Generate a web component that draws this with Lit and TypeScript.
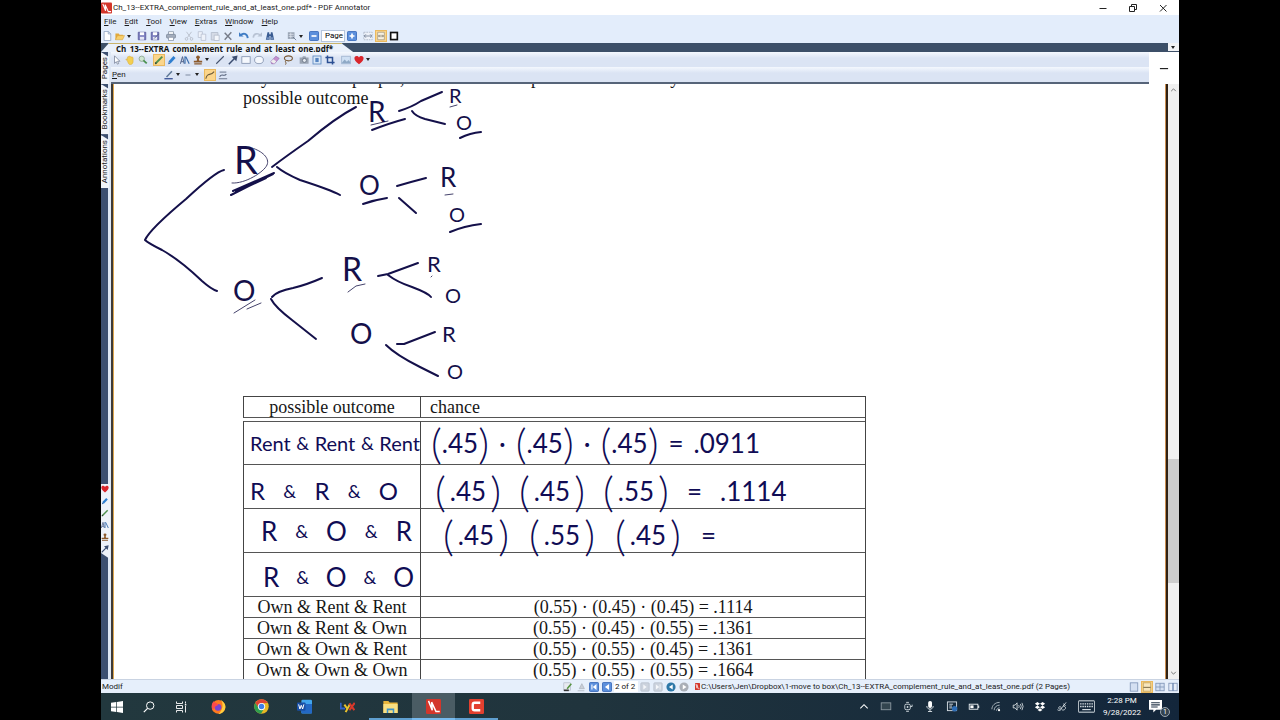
import { LitElement, html, svg, css } from "lit";
import { customElement, property } from "lit/decorators.js";
import { classMap } from "lit/directives/class-map.js";

const blueBox = (inner: unknown) => svg`<rect x="0.5" y="0.5" width="11" height="11" rx="1.5" fill="#5b8fdc" stroke="#2f62b4"/>${inner}`;
const greyBox = (inner: unknown) => svg`<rect x="1" y="1" width="10" height="10" rx="1" fill="#ccd3de" stroke="#b9c1ce"/>${inner}`;
const floppy = svg`<path d="M1.5 1.5h9v9h-9z" fill="#7d7fc0" stroke="#5a5b9c"/><path d="M3.5 1.5h5v3.5h-5z" fill="#fff"/><path d="M3.5 7h5v3.5h-5z" fill="#e6e8f6"/>`;
const annot = svg`<rect width="12" height="12" rx="1" fill="#d3362b"/><path d="M2 1.5 5 9 4.5 2.5 8 10H11" fill="none" stroke="#fff" stroke-width="1.2"/>`;

const ICONS: Record<string, unknown> = {
  annot,
  new: svg`<path d="M2.5.5h5l3 3v8h-8z" fill="#fff" stroke="#8fa3c0"/><path d="M7.500.5v3h3" fill="none" stroke="#8fa3c0"/>`,
  open: svg`<path d="M.5 10.500V3h4l1 1.500h4V6" fill="#e2a93c"/><path d="M.5 10.500 3 5.500h8.500l-2.500 5z" fill="#f7cf6b" stroke="#d39a34" stroke-width=".6"/>`,
  save: floppy,
  saveas: svg`${floppy}<path d="M5 9 10.500 3.500" stroke="#555c80"/>`,
  print: svg`<path d="M3 4V.8h6V4" fill="#fff" stroke="#8b97a8"/><rect x=".7" y="4" width="10.600" height="4.500" rx="1" fill="#a4aebd" stroke="#7b8799"/><path d="M3 7.500h6v4H3z" fill="#fff" stroke="#8b97a8"/>`,
  cut: svg`<g fill="none" stroke="#b4bac6"><path d="M3 1l5 7M9 1 4 8"/><circle cx="3" cy="9.500" r="1.600"/><circle cx="9" cy="9.500" r="1.600"/></g>`,
  copy: svg`<g fill="#eef2fa" stroke="#b9c2d2"><path d="M1.500.8h5v7h-5z"/><path d="M5 3.800h5.500v7.500H5z"/></g>`,
  paste: svg`<g stroke="#b3bccb"><path d="M1.500 1.800h8v9h-8z" fill="#d5dbe6"/><path d="M5 5h6v6.500H5z" fill="#f3f6fb"/></g>`,
  del: svg`<path d="M2 2 10 10.500M10 1.500 2 10.500" stroke="#777d8a" stroke-width="1.700"/>`,
  undo: svg`<path d="M2 5c3-3 8-2 8.500 3.500" fill="none" stroke="#3f7cc4" stroke-width="2.200"/><path d="M0 6.500V1.500L5.500 6.500z" fill="#3f7cc4"/>`,
  redo: svg`<path d="M10 5C7 2 2 3 1.500 8" fill="none" stroke="#b8c3d4" stroke-width="2"/><path d="M12 6.500V1.500L6.500 6.500z" fill="#b8c3d4"/>`,
  find: svg`<path d="M3 1.500h2l.7 9H1zM7 1.500h2l2 9H6.300z" fill="#3a5c92"/><path d="M4.500 5h3" stroke="#3a5c92" stroke-width="2"/><path d="M2 8.500h3M7 8.500h3" stroke="#a9c4ea"/>`,
  view: svg`<rect x="1" y="1.500" width="8" height="8" fill="#9aa5b5"/><path d="M2 4h6M2 6.500h6M4.500 2v7" stroke="#e7ecf4" stroke-width=".8"/><path d="M7 7l4 4" stroke="#66758c"/>`,
  minus: blueBox(svg`<path d="M3 6h6" stroke="#fff" stroke-width="2"/>`),
  plus: blueBox(svg`<path d="M3 6h6M6 3v6" stroke="#fff" stroke-width="2"/>`),
  fitw: svg`<path d="M1 1.500h10v9H1z" fill="#eef2f9" stroke="#a9b4c6" stroke-dasharray="2 1"/><path d="M1.500 6h9M3.500 4 1.500 6l2 2M8.500 4l2 2-2 2" fill="none" stroke="#6f7d93"/>`,
  fitp: svg`<path d="M2 1.500h8v9H2z" fill="#f8f1e0" stroke="#a9a08a"/><path d="M3 6h6M4.500 4.500 3 6l1.500 1.500M7.500 4.500 9 6 7.500 7.500" fill="none" stroke="#7f786a"/>`,
  full: svg`<rect x="2" y="1.800" width="8" height="8.500" fill="#fff" stroke="#111" stroke-width="2"/>`,
  cursor: svg`<path d="M3 1v9l2.200-2L6.500 11 8 10.300 6.700 7.500H9.500z" fill="#fff" stroke="#66718a" stroke-width=".8"/>`,
  hand: svg`<path d="M3 7 1 5.500c0-1 1-1 2 0V2.500c.5-1 1.500-.7 1.500 0 0-1.500 1.700-1.500 1.700 0 .3-1 1.700-.8 1.700.4.5-.7 1.800-.4 1.800.6V8c0 2-1.500 3.500-3.500 3.500S3.500 9 3 7z" fill="#f3cf52" stroke="#d9a92e" stroke-width=".6"/>`,
  zoom: svg`<circle cx="4.500" cy="4.500" r="3.200" fill="#cfe6d0" stroke="#8ba392"/><path d="M6.500 6.500 10.500 10" stroke="#4a9150" stroke-width="2.200"/>`,
  pen: svg`<path d="M1.500 10.500 10 2" stroke="#4e8f4d" stroke-width="2.200"/><path d="M1 11l1-2.500L3.500 10z" fill="#333"/>`,
  marker: svg`<path d="M3 9 9 2.500" stroke="#2f7fd0" stroke-width="3.400"/><path d="M1.500 11 2 8.500 4 10.200z" fill="#1d4f93"/>`,
  text: svg`<path d="M.5 10.500 3 2l2 8.500M1.300 8h3" fill="none" stroke="#52658c" stroke-width="1.200"/><path d="M6 1.500v9M7 2l4 8.500" stroke="#3c6fae" stroke-width="1.400"/>`,
  stamp: svg`<circle cx="6" cy="2.800" r="2.200" fill="#8c5a2c"/><path d="M5 4h2l.5 3H11v2H1V7h3.500zM1.500 10h9v1.500h-9z" fill="#8c5a2c"/>`,
  line: svg`<path d="M1.500 10.500 10.500 1.500" stroke="#46536e" stroke-width="1.300"/>`,
  arrow: svg`<path d="M1 11 8 4" stroke="#3c4e70" stroke-width="1.800"/><path d="M11.500.5 10 7.500 4.500 2z" fill="#3c4e70"/>`,
  rect: svg`<rect x="1" y="2" width="10" height="8" fill="#f5f8fd" stroke="#8393ae"/>`,
  oval: svg`<ellipse cx="6" cy="6" rx="5.300" ry="4.400" fill="#f5f8fd" stroke="#8393ae"/>`,
  eraser: svg`<path d="M1 8 7 1.500 11 4 5.500 10.500 2 10.500z" fill="#c592d0" stroke="#8e62a8" stroke-width=".7"/><path d="M1 8l4 2.500L7.500 7.500 3.800 5z" fill="#eee"/>`,
  lasso: svg`<ellipse cx="6.500" cy="4" rx="4.800" ry="3" fill="none" stroke="#7a5a35" stroke-width="1.300"/><path d="M3.500 6.500C1.500 8 5 9 3 11.500" fill="none" stroke="#7a5a35" stroke-width="1.200"/>`,
  camera: svg`<path d="M.8 3h3l1-1.500h3L8.500 3h3v7.500H.8z" fill="#9ba4b2"/><circle cx="6.500" cy="6.500" r="2.400" fill="#e6eaf0" stroke="#626d7e"/>`,
  snap: svg`<rect x="1.200" y="1.200" width="9.600" height="9.600" fill="#dce9f8" stroke="#5a87bf"/><rect x="4" y="3.500" width="4" height="5" fill="#5483c0"/>`,
  crop: svg`<path d="M3 .5v8.500h8.500M.5 3H9v8.500" fill="none" stroke="#2b4f93" stroke-width="1.800"/>`,
  picture: svg`<rect x=".8" y="1.500" width="10.400" height="9" fill="#cfe0f4" stroke="#9fb4d0"/><path d="M1.300 9l3-3.500L7 8l2-2 2 2.500V10H1.300z" fill="#8fa9c6"/>`,
  heart: svg`<path d="M6 11.200C2 8 .5 6 .5 3.900.5.800 4.500.2 6 2.900 7.500.2 11.500.8 11.500 3.900 11.500 6 10 8 6 11.200z" fill="#d9252b"/>`,
  penw: svg`<path d="M3 8.500 9.500 1.500" stroke="#5e7896" stroke-width="1.800"/><path d="M.5 10.500h10" stroke="#253f8b" stroke-width="1.400"/>`,
  dash: svg`<path d="M3 6h6" stroke="#6e7c94"/>`,
  curve: svg`<path d="M1 10.500C3 2 6 8 11 2" fill="none" stroke="#6b5a39" stroke-width="1.300"/>`,
  press: svg`<path d="M1 10.500h10M2 2.500h8" stroke="#55627a"/><path d="M2 8C5 3 7 9 10 5" fill="none" stroke="#55627a" stroke-width="1.300"/>`,
  edit: svg`<rect x="1" y="1" width="8" height="9" fill="#e8ebf1" stroke="#a8b0bd" stroke-width=".7"/><path d="M5 8l5-6" stroke="#55943f" stroke-width="1.800"/><path d="M1 10h6" stroke="#333" stroke-width="2"/>`,
  edit2: svg`<path d="M2 10.500h8M4 8l3-6 3 6z" fill="#c9cfd8" stroke="#b0b7c2"/>`,
  first: blueBox(svg`<path d="M3.500 3v6" stroke="#fff" stroke-width="1.300"/><path d="M9 2.500v7L4.500 6z" fill="#fff"/>`),
  prev: blueBox(svg`<path d="M8.500 2.500v7L3.500 6z" fill="#fff"/>`),
  next: greyBox(svg`<path d="M4 3v6l4-3z" fill="#f5f7fa"/>`),
  last: greyBox(svg`<path d="M3.500 3v6l4-3z" fill="#f5f7fa"/><path d="M8.500 3v6" stroke="#f5f7fa"/>`),
  back: svg`<circle cx="6" cy="6" r="5.500" fill="#2d78a8"/><path d="M8 3v6L3.500 6z" fill="#fff"/>`,
  fwd: svg`<circle cx="6" cy="6" r="5.500" fill="#a9aeb6"/><path d="M4.500 3v6L9 6z" fill="#fff"/>`,
  lay1: svg`<rect x="1.500" y="1" width="9" height="10" fill="#d4e0f2" stroke="#7f95b8"/>`,
  lay2: svg`<rect x="1.500" y="1" width="9" height="10" fill="#f7e6bd" stroke="#c2a35c"/><path d="M1.500 6.500h9" stroke="#8d7d58" stroke-width="1.400"/>`,
  lay3: svg`<rect x="1" y="1.500" width="10" height="9" fill="#d4e0f2" stroke="#7f95b8"/><path d="M6 1.500v9M1 6h10" stroke="#7f95b8"/>`,
  lay4: svg`<rect x="1" y="1.500" width="10" height="9" fill="#e6edf8" stroke="#7f95b8"/><path d="M6 1.500v9" stroke="#5876a5" stroke-width="1.400"/>`,
  min: svg`<path d="M2.500 6.500h7" stroke="#222"/>`,
  restore: svg`<path d="M2.500 4.500h5v5h-5zM4.500 4.500v-2h5v5h-2" fill="none" stroke="#222"/>`,
  close: svg`<path d="M3 3l6.500 6.500M9.500 3 3 9.500" stroke="#222"/>`,
  windows: svg`<path d="M0 1.700 5.300 1v4.700H0zM6 .9 12 0v5.700H6zM0 6.400h5.300V11L0 10.300zM6 6.400h6V12l-6-.9z" fill="#fff"/>`,
  search: svg`<circle cx="7.200" cy="4.600" r="3.700" fill="none" stroke="#fff"/><path d="M4.600 7.300.8 11.200" stroke="#fff" stroke-width="1.200"/>`,
  taskview: svg`<path d="M1.500.5v2h6v-2M1.500 11.500v-2h6v2M1.500 4.500h6v3h-6zM10.500.5v2M10.500 5v6.500" fill="none" stroke="#fff" stroke-width=".9"/><rect x="9.800" y="3" width="1.500" height="1.500" fill="#fff"/>`,
  firefox: svg`<circle cx="6" cy="6.300" r="5.500" fill="#ff7a1f"/><path d="M8 .3c1 1.800 4 3 3.500 6.500C11 10 8.500 12 6 12 9 9 10.500 5 8 .3z" fill="#ffcf3e"/><circle cx="5.600" cy="6.600" r="2.700" fill="#7a44cf"/><path d="M.6 5C.8 3.500 1.500 2.500 2 1.800 2.500 3 4.500 3 6 4.500L3.500 6 1 9z" fill="#ff4a4a"/>`,
  chrome: svg`<circle cx="6" cy="6" r="5.800" fill="#e8b824"/><path d="M1 3.100A5.800 5.800 0 0 1 11 3.100L6 3.400 3.600 7.200z" fill="#dd4335"/><path d="M1 3.100A5.800 5.800 0 0 0 5.600 11.800L8 7.700 4 7.500z" fill="#2f9e4f"/><circle cx="6" cy="6" r="2.900" fill="#fff"/><circle cx="6" cy="6" r="2.200" fill="#3f7fe8"/>`,
  word: svg`<rect x="3.500" y=".5" width="8.500" height="11" rx="1" fill="#41a5ee"/><path d="M3.500 4H12v7.500H3.500z" fill="#2368c4"/><rect x="0" y="2.700" width="6.800" height="6.600" rx=".7" fill="#184fa5"/><path d="M1.300 4.300 2.300 8 3.400 5 4.500 8 5.500 4.300" fill="none" stroke="#fff" stroke-width=".8"/>`,
  lyx: svg`<path d="M.5 3v4.500H4" fill="none" stroke="#2f61c9" stroke-width="1.600"/><path d="M3.500 4.500 6 8M8 4 4.500 10.500" stroke="#e9c22d" stroke-width="1.600"/><path d="M7.500 3.500 11.500 9M11.800 3 7.500 9" stroke="#d8382b" stroke-width="1.700"/>`,
  folder: svg`<path d="M.3 1.500h4l1 1.200h6.400v8.500H.3z" fill="#e9b53c"/><path d="M.3 4h11.400v7.200H.3z" fill="#f9df83"/><path d="M3 11.200V7.500h6v3.700H7.800V9H4.200v2.200z" fill="#3f93c9"/>`,
  camtasia: svg`<rect width="12" height="12" rx="1" fill="#e3402f"/><path d="M9 3H4.500Q3 3 3 4.500v3Q3 9 4.500 9H9" fill="none" stroke="#fff" stroke-width="1.900"/>`,
  up: svg`<path d="M2 8l4-4 4 4" fill="none" stroke="currentColor" stroke-width="1.100"/>`,
  tablet: svg`<rect x=".8" y="2" width="10.400" height="7.500" fill="#33454f" stroke="#8a979f"/>`,
  meet: svg`<rect x="2.500" y="3.500" width="6" height="6" rx="1.500" fill="none" stroke="#cfd8dd"/><path d="M4 1.500h3M8.500 6h2V4M4 11.300h3" stroke="#cfd8dd" fill="none"/><circle cx="5.500" cy="6.500" r="1" fill="#cfd8dd"/>`,
  mic: svg`<rect x="4" y="0" width="4.200" height="7.500" rx="2" fill="#fff"/><path d="M2.500 5.500c0 4.500 7 4.500 7 0M6 9v2.500M3.800 11.500h4.500" fill="none" stroke="#dfe6ea"/>`,
  outlook: svg`<rect x="1" y="1" width="10" height="9.500" fill="none" stroke="#d5dde3"/><path d="M3 3.500h4M3 5.500h3M3 7.500h3" stroke="#d5dde3"/><circle cx="8.800" cy="8.500" r="3" fill="#2e6db4"/>`,
  battery: svg`<rect x=".8" y="3.500" width="9.400" height="5.500" fill="none" stroke="#e8edf0"/><path d="M10.500 5h1.200v2.500h-1.200z" fill="#e8edf0"/><path d="M2 4.800h3.500v3H2z" fill="#fff"/>`,
  wifi: svg`<g fill="none" stroke="#aebac1"><path d="M1.500 9C1.500 5 5 1.500 10 1.500M4 10c0-3 2.500-5.500 6-5.500M6.500 10.500C6.500 9 8 7.500 10 7.500"/></g><circle cx="9.300" cy="10" r="1.200" fill="#fff"/>`,
  speaker: svg`<path d="M.8 4.500h2L5 2v8L2.800 7.500h-2z" fill="none" stroke="#e3e9ec" stroke-width=".9"/><path d="M6.800 4.500q1 1.500 0 3M8.600 3.200q1.900 2.800 0 5.600M10.300 2q2.500 4 0 8" fill="none" stroke="#dde4e8" stroke-width=".9"/>`,
  dropbox: svg`<path d="M3.200 1 6 2.900 3.200 4.800.4 2.900zM8.800 1l2.800 1.900L8.800 4.800 6 2.900zM3.200 4.900 6 6.800 3.200 8.700.4 6.800zM8.800 4.900l2.800 1.900-2.800 1.900L6 6.800zM6 7.900l2.700 1.800L6 11.500 3.300 9.700z" fill="#fff"/>`,
  inkpen: svg`<path d="M1 9.500C4 12 7 8 4.500 6.500S1 10 5 8.500L10.500 1.500M7.500 3l2.500 2M6 9.500C8 11 11 8 9.500 6.500S7 7 8 4" fill="none" stroke="#dde4e8" stroke-width=".9"/>`,
  keyboard: svg`<rect x=".2" y="2" width="11.600" height="8" rx=".5" fill="none" stroke="#dde4e8" stroke-width=".7"/><path d="M1.500 4.200h9M1.500 6h9" stroke="#dde4e8" stroke-width=".9" stroke-dasharray="1 .6"/><path d="M3 8.200h6" stroke="#dde4e8" stroke-width=".8"/>`,
};

const icon = (n: string) => html`<svg class="ico" viewBox="0 0 12 12" aria-hidden="true">${ICONS[n]}</svg>`;

// "|" is a narrow separator, "||" and "|||" wider ones, "v" a drop-down arrow, "*" marks the active tool.
const TOOLBAR = ["new", "open", "v", "|", "save", "saveas", "|", "print", "||", "cut", "copy", "paste", "del", "|", "undo", "redo", "find", "|||", "view", "v", "|", "minus"];
const TOOLBAR_END = ["plus", "|", "fitw", "*fitp", "full"];
const TOOLS = ["cursor", "hand", "zoom", "|", "*pen", "marker", "text", "stamp", "v", "|", "line", "arrow", "rect", "oval", "|", "eraser", "lasso", "|", "camera", "snap", "crop", "|", "picture", "heart", "v"];
const PEN_OPTIONS = ["penw", "v", "dash", "v", "|", "*curve", "press"];

const tools = (list: string[]) =>
  list.map((n) => {
    if (n[0] === "|") return html`<span class="sep s${n.length}"></span>`;
    if (n === "v") return html`<button class="drop" aria-label="More"></button>`;
    const on = n[0] === "*";
    const name = on ? n.slice(1) : n;
    return html`<button class=${classMap({ tool: true, on })} aria-label=${name}>${icon(name)}</button>`;
  });

type Node = [string, number, number, number];
const NODES: Node[] = [
  ["R", 234, 174, 38], ["R", 368, 122, 28], ["R", 449, 103, 20], ["O", 456, 130, 20],
  ["O", 359, 195, 26], ["R", 440, 187, 26], ["O", 449, 222, 20],
  ["O", 233, 301, 28], ["R", 342, 281, 32], ["R", 427, 272, 22], ["O", 445, 303, 20],
  ["O", 350, 344, 28], ["R", 442, 342, 22], ["O", 447, 379, 20],
];
const STROKES = [
  "M224 170Q215 172 186 199Q150 229 145 240Q148 243 162 250Q180 260 202 281Q211 289 217 291",
  "M272 167Q285 157 308 141Q335 118 356 107", "M277 167Q284 173 300 180Q331 190 340 195",
  "M399 111Q412 107 421 101L442 92", "M412 111Q415 116 425 119L445 124",
  "M397 186L411 182L426 178", "M399 198L416 213",
  "M322 278Q306 285 293 288Q277 291 272 297", "M271 299Q275 307 292 320L316 339",
  "M378 276L388 274L418 263", "M388 275Q397 282 412 287Q428 293 431 297",
  "M397 344L404 344L435 332", "M386 345Q396 355 420 367L438 376",
  "M231 195L273 174M233 191L274 173M236 192L266 178",
  "M372 130Q390 123 405 119", "M460 138Q470 133 481 132",
  "M363 204Q374 200 387 198", "M450 232Q464 226 481 224",
];
const THIN = [
  "M252 148C262 151 270 158 267 165S245 184 232 183", "M371 125L388 121", "M450 107L457 105", "M445 195L453 194",
  "M234 313L255 300M247 309L261 303", "M348 292L356 286L365 284M431 277L432 276",
];

const INK_ROWS = [
  { cls: "r1", outcome: ["Rent", "&", "Rent", "&", "Rent"], chance: ["(.45)", "·", "(.45)", "·", "(.45)", "=", ".0911"] },
  { cls: "r2", outcome: ["R", "&", "R", "&", "O"], chance: ["(.45)", "(.45)", "(.55)", "=", ".1114"] },
  { cls: "r3", outcome: ["R", "&", "O", "&", "R"], chance: ["(.45)", "(.55)", "(.45)", "="] },
  { cls: "r4", outcome: ["R", "&", "O", "&", "O"], chance: [] as string[] },
];
const TYPED_ROWS = [
  ["Own & Rent & Rent", "(0.55) · (0.45) · (0.45) = .1114"],
  ["Own & Rent & Own", "(0.55) · (0.45) · (0.55) = .1361"],
  ["Own & Own & Rent", "(0.55) · (0.55) · (0.45) = .1361"],
  ["Own & Own & Own", "(0.55) · (0.55) · (0.55) = .1664"],
];

const base = css`
  * { box-sizing: border-box; }
  button { font: inherit; color: inherit; border: 0; padding: 0; margin: 0; background: none; display: block; flex: none; }
  .ico { display: block; width: 100%; height: 100%; }
`;

@customElement("pdf-page")
class PdfPage extends LitElement {
  static styles = [base, css`
    :host { display: block; overflow: hidden; min-height: 0; background: #fff; color: #161616; font: 18px/20px "Liberation Serif", serif; }
    .intro { margin: -16px 129px 0; }
    .tree { margin: 0 0 0 16px; }
    .tree svg { display: block; overflow: visible; }
    .stroke { fill: none; stroke: #14104a; stroke-width: 2; stroke-linecap: round; stroke-linejoin: round; }
    .thin { fill: none; stroke: #45436c; stroke-width: 1; stroke-linecap: round; }
    .node { font-family: Lato, sans-serif; fill: #14104a; }
    table { width: 59.3%; margin-left: 129px; border-collapse: separate; border-spacing: 0; table-layout: fixed; border-right: 1px solid #444; }
    .first { width: 177px; }
    th, td { padding: 0; border-left: 1px solid #444; border-bottom: 1px solid #555; font-weight: normal; white-space: nowrap; text-align: center; height: 21px; }
    th { border-top: 1px solid #444; height: 22px; }
    th.chance { text-align: left; padding-left: 9px; }
    tbody::before { content: ""; display: table-row; height: 3px; }
    .r1 td { border-top: 1px solid #555; }
    .ink td { height: 44px; }
    .hand { display: flex; align-items: center; height: 42px; color: #100c55; font: 24px/42px Lato, sans-serif; }
    .outcome { justify-content: space-between; }
    .r1 .outcome { font-size: 20px; padding-left: 6px; }
    .r2 .outcome { padding: 8px 22px 0 6px; }
    .r3 .outcome { padding: 0 8px 0 17px; font-size: 26px; }
    .r4 .outcome { padding: 4px 6px 0 19px; font-size: 26px; }
    .amp { font-size: 18px; }
    .odds { font-size: 26px; padding-left: 10px; gap: 10px; }
    .r2 .odds { padding: 8px 0 0 14px; gap: 18px; }
    .r3 .odds { padding: 8px 0 0 22px; gap: 20px; }
    .group { display: flex; align-items: center; }
    .r2 .group, .r3 .group { gap: 4px; }
    .paren { font-size: 42px; font-weight: 300; }
  `];

  private term(t: string) {
    if (t[0] !== "(") return html`<span>${t}</span>`;
    return html`<span class="group"><span class="paren">(</span><span>${t.slice(1, -1)}</span><span class="paren">)</span></span>`;
  }

  render() {
    return html`
      <p class="intro">Say we have 3 people, use a tree to compute chances for any<br>possible outcome</p>
      <figure class="tree">
        <svg width="400" height="288" viewBox="130 108 400 288" role="img" aria-label="Outcome tree">
          ${STROKES.map((d) => svg`<path class="stroke" d=${d} />`)}
          ${THIN.map((d) => svg`<path class="thin" d=${d} />`)}
          ${NODES.map(([t, x, y, s]) => svg`<text class="node" x=${x} y=${y} font-size=${s}>${t}</text>`)}
        </svg>
      </figure>
      <table>
        <colgroup><col class="first"><col></colgroup>
        <thead><tr><th>possible outcome</th><th class="chance">chance</th></tr></thead>
        <tbody>
          ${INK_ROWS.map((r) => html`<tr class="ink ${r.cls}">
            <td><div class="hand outcome">${r.outcome.map((w) => html`<span class=${classMap({ amp: w === "&" })}>${w}</span>`)}</div></td>
            <td><div class="hand odds">${r.chance.map((t) => this.term(t))}</div></td>
          </tr>`)}
          ${TYPED_ROWS.map(([o, c]) => html`<tr><td>${o}</td><td>${c}</td></tr>`)}
        </tbody>
      </table>`;
  }
}

@customElement("task-bar")
class TaskBar extends LitElement {
  static styles = [base, css`
    :host { display: flex; height: 27px; flex: none; background: linear-gradient(90deg, #22383e, #20343d 45%, #13263b); color: #fff; font: 8px/12px Roboto, sans-serif; }
    .app { display: flex; align-items: center; justify-content: center; height: 27px; width: 43px; }
    .app.sys { width: 32px; }
    .app .ico { width: 15px; height: 15px; }
    .app.sys .ico { width: 12px; height: 12px; }
    .app.running { border-bottom: 2px solid #5f9fd0; padding-top: 2px; }
    .app.active { background: #4a5c64; border-bottom: 2px solid #76b9ed; padding-top: 2px; }
    .tray { margin-left: auto; display: flex; align-items: center; padding-right: 9px; }
    .tray button { width: 22px; height: 27px; padding: 8px 5px; }
    .tray .wide { width: 27px; padding: 5px; }
    .clock { width: 44px; text-align: center; white-space: nowrap; }
    .note { position: relative; }
    .tray .note { width: 26px; padding: 7px 8px 7px 5px; }
    .badge { position: absolute; right: 0; bottom: 3px; width: 10px; height: 10px; border: 1px solid #9aa6b0; border-radius: 50%; background: #33424f; font-size: 7px; line-height: 8px; }
  `];

  render() {
    const apps: [string, string][] = [
      ["windows", "sys"], ["search", "sys"], ["taskview", "sys"], ["firefox", ""], ["chrome", ""], ["word", ""],
      ["lyx", ""], ["folder", "running"], ["annot", "active"], ["camtasia", "running"],
    ];
    const tray = ["up", "tablet", "meet", "mic", "outlook", "battery", "wifi", "speaker", "dropbox", "inkpen"];
    return html`
      ${apps.map(([n, c]) => html`<button class="app ${c}" aria-label=${n}>${icon(n)}</button>`)}
      <div class="tray">
        ${tray.map((n) => html`<button aria-label=${n}>${icon(n)}</button>`)}
        <button class="wide" aria-label="keyboard">${icon("keyboard")}</button>
        <div class="clock">2:28 PM<br>9/28/2022</div>
        <button class="note" aria-label="Notifications">
          <svg class="ico" viewBox="0 0 12 12"><path d="M0 0h12v9H6.500L4 11.500V9H0z" fill="#fff"/><path d="M2 2.500h8M2 4.500h8M2 6.500h6" stroke="#26374a"/></svg>
          <span class="badge">1</span>
        </button>
      </div>`;
  }
}

@customElement("app-root")
class AppRoot extends LitElement {
  @property() fileName = "Ch_13--EXTRA_complement_rule_and_at_least_one.pdf";

  static styles = [base, css`
    :host { display: flex; flex-direction: column; height: 100vh; padding: 0 101px; background: #000; color: #1b1b1b; font: 8px/12px Roboto, sans-serif; overflow: hidden; white-space: nowrap; }
    .bar { display: flex; align-items: center; flex: none; }
    .title { height: 15px; background: #fff; gap: 1px; }
    .title > .ico { width: 11px; height: 12px; flex: none; }
    .controls { margin-left: auto; display: flex; gap: 18px; padding-right: 10px; }
    .controls button { width: 12px; height: 12px; }
    .menu { height: 14px; background: #e3edfb; padding-left: 3px; gap: 8px; }
    .menu button::first-letter { text-decoration: underline; }
    .tools { height: 14px; gap: 1px; background: #e3edfb; }
    .tool { width: 12px; height: 12px; padding: 1px; }
    .tool.on { background: #fbd58b; outline: 1px solid #eab95f; outline-offset: -1px; }
    .drop { width: 5px; height: 12px; display: flex; align-items: center; }
    .drop::before { content: ""; border: 2px solid transparent; border-top: 3px solid #222; border-bottom: 0; }
    .sep { flex: none; width: 2px; }
    .s2 { width: 4px; }
    .s3 { width: 8px; }
    select { width: 24px; height: 12px; border: 1px solid #b6c6dd; background: #fff; font: 8px/10px Roboto, sans-serif; padding: 0 0 0 3px; flex: none; appearance: none; }
    .tabs { height: 9px; flex: none; background: #3c4f68; display: flex; overflow: hidden; justify-content: space-between; }
    .tab { height: 9px; padding: 0 20px 0 15px; background: #eaf1fb; border-top: 1px solid #c9b36a; font: bold 8px/10px "Open Sans", sans-serif; color: #111; clip-path: polygon(8px 0, calc(100% - 12px) 0, 100% 100%, 0 100%); overflow: hidden; }
    .more { width: 11px; background: #f2f3f5; display: flex; align-items: center; padding-left: 3px; height: 8px; }
    .main { flex: 1; display: flex; min-height: 0; }
    .side { width: 10px; flex: none; background: linear-gradient(90deg, #3c4f70 7px, #dfe8f5 7px); display: flex; flex-direction: column; align-items: flex-start; }
    .side button { writing-mode: vertical-rl; transform: rotate(180deg); width: 8px; line-height: 8px; padding: 5px 0; background: #f1f4f9; text-align: center; clip-path: polygon(0 0, 100% 0, 100% 100%, 0 calc(100% - 5px)); }
    .favs { margin-top: auto; margin-bottom: 120px; width: 9px; background: #eef2f9; padding: 1px 0 6px; display: flex; flex-direction: column; gap: 4px; clip-path: polygon(0 0, 100% 0, 100% 100%, 0 calc(100% - 6px)); }
    .favs .ico { width: 8px; height: 8px; }
    .work { flex: 1; min-width: 0; display: flex; flex-direction: column; }
    .panel { display: flex; flex: none; }
    .rows { flex: 1; border-bottom: 2px solid #566479; }
    .row { display: flex; align-items: center; gap: 1px; height: 15px; background: linear-gradient(#f4f8fe, #dbe4f4 40%); }
    .label { width: 51px; flex: none; padding-left: 1px; }
    .label::first-letter { text-decoration: underline; }
    .float { width: 30px; background: #fff; display: flex; align-items: center; justify-content: center; }
    .float .ico { width: 14px; height: 14px; }
    .view { flex: 1; display: flex; min-height: 0; }
    .edge { width: 3px; flex: none; background: linear-gradient(90deg, #3c3a3a 2px, #dca650 2px); }
    .edge.right { background: linear-gradient(90deg, #c98d50 1px, #2f2114 1px); }
    pdf-page { flex: 1; min-width: 0; }
    .scroll { width: 11px; flex: none; background: #f0f0f0; color: #333; display: flex; flex-direction: column; align-items: center; }
    .scroll button { width: 9px; height: 12px; padding: 2px 1px; }
    .scroll .down { transform: rotate(180deg); }
    .thumb { width: 100%; flex: 0 0 124px; margin-top: auto; margin-bottom: 84px; background: #cdcdcd; }
    .status { height: 14px; gap: 1px; background: #e6effb; border-top: 1px solid #c9d3e2; }
    .mode { flex: 0 0 460px; padding-left: 1px; }
    .page-no { width: 24px; height: 11px; border: 0; background: #fff; font: 8px/11px Roboto, sans-serif; padding: 0 0 0 1px; color: #111; }
    .status .layouts { margin-left: auto; display: flex; gap: 1px; }
    .tiny { width: 5px; height: 7px; flex: none; margin-left: 1px; }
  `];

  render() {
    return html`
      <header class="bar title">
        ${icon("annot")}<span>${this.fileName}* - PDF Annotator</span>
        <div class="controls">
          ${["min", "restore", "close"].map((n) => html`<button aria-label=${n}>${icon(n)}</button>`)}
        </div>
      </header>
      <nav class="bar menu">${["File", "Edit", "Tool", "View", "Extras", "Window", "Help"].map((m) => html`<button>${m}</button>`)}</nav>
      <div class="bar tools">
        ${tools(TOOLBAR)}
        <select aria-label="Zoom"><option>Page</option></select>
        ${tools(TOOLBAR_END)}
      </div>
      <div class="tabs"><div class="tab">${this.fileName}*</div><button class="drop more" aria-label="Tabs"></button></div>
      <div class="main">
        <aside class="side">
          <button>Pages</button><button>Bookmarks</button><button>Annotations</button>
          <div class="favs">${["heart", "marker", "pen", "text", "stamp", "arrow"].map(icon)}</div>
        </aside>
        <div class="work">
          <div class="panel">
            <div class="rows">
              <div class="row">${tools(TOOLS)}</div>
              <div class="row"><span class="label">Pen</span>${tools(PEN_OPTIONS)}</div>
            </div>
            <div class="float">${icon("min")}</div>
          </div>
          <div class="view">
            <div class="edge"></div>
            <pdf-page></pdf-page>
            <div class="edge right"></div>
            <div class="scroll">
              <button aria-label="Scroll up">${icon("up")}</button>
              <div class="thumb"></div>
              <button class="down" aria-label="Scroll down">${icon("up")}</button>
            </div>
          </div>
        </div>
      </div>
      <footer class="bar status">
        <span class="mode">Modif</span>
        ${tools(["edit", "edit2", "first", "prev"])}
        <input class="page-no" aria-label="Page" .value=${"2 of 2"}>
        ${tools(["next", "last", "back", "fwd", "|"])}
        <svg class="tiny" viewBox="0 0 12 12" preserveAspectRatio="none">${annot}</svg>
        <span>C:\\Users\\Jen\\Dropbox\\1-move to box\\${this.fileName} (2 Pages)</span>
        <div class="layouts">${tools(["lay1", "*lay2", "lay3", "lay4"])}</div>
      </footer>
      <task-bar></task-bar>`;
  }
}
